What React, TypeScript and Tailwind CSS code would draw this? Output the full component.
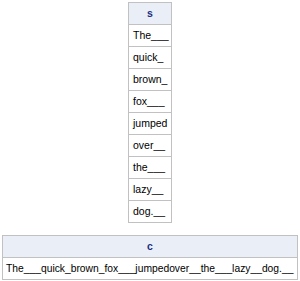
const words = ["The___", "quick_", "brown_", "fox___", "jumped", "over__", "the___", "lazy__", "dog.__"]

export default function App() {
    return (
        <div className="w-[300px] h-[281px] bg-white pt-[2px] text-[10.5px] text-black" style={{ fontFamily: '"Liberation Sans", Arial, sans-serif' }}>
            <table className="mx-auto w-[44px] border-collapse">
                <thead>
                    <tr>
                        <th className="h-[22px] border border-[#c1c1c1] bg-[#e9eef7] text-center font-bold text-[#1b2f80]">s</th>
                    </tr>
                </thead>
                <tbody>
                    {words.map((w, i) => (
                        <tr key={i}>
                            <td className="h-[22px] border border-[#c1c1c1] pl-[4px] pr-[2px] text-left whitespace-nowrap">{w}</td>
                        </tr>
                    ))}
                </tbody>
            </table>
            <table className="mx-[2px] mt-[12px] w-[296px] border-collapse">
                <thead>
                    <tr>
                        <th className="h-[22px] border border-[#c1c1c1] bg-[#e9eef7] text-center font-bold text-[#1b2f80]">c</th>
                    </tr>
                </thead>
                <tbody>
                    <tr>
                        <td className="h-[22px] border border-[#c1c1c1] pl-[3px] text-left text-[10.3px] whitespace-nowrap">{words.join("")}</td>
                    </tr>
                </tbody>
            </table>
        </div>
    )
}
